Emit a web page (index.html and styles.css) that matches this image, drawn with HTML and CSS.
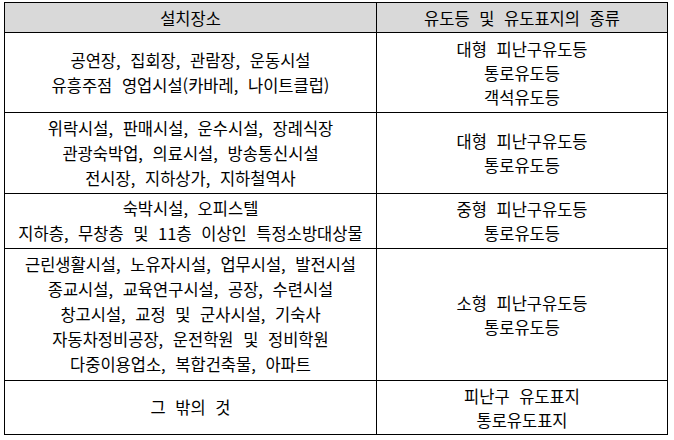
FILE: index.html
```html
<!DOCTYPE html>
<html lang="ko">
<head>
<meta charset="utf-8">
<link rel="stylesheet" href="styles.css">
</head>
<body>
<table class="tbl">
  <colgroup><col class="c1"><col class="c2"></colgroup>
  <thead>
    <tr class="h"><th>설치장소</th><th>유도등 및 유도표지의 종류</th></tr>
  </thead>
  <tbody>
    <tr class="r1">
      <td class="place">공연장, 집회장, 관람장, 운동시설<br>유흥주점 영업시설(카바레, 나이트클럽)</td>
      <td class="kind">대형 피난구유도등<br>통로유도등<br>객석유도등</td>
    </tr>
    <tr class="r2">
      <td class="place">위락시설, 판매시설, 운수시설, 장례식장<br>관광숙박업, 의료시설, 방송통신시설<br>전시장, 지하상가, 지하철역사</td>
      <td class="kind">대형 피난구유도등<br>통로유도등</td>
    </tr>
    <tr class="r3">
      <td class="place">숙박시설, 오피스텔<br>지하층, 무창층 및 11층 이상인 특정소방대상물</td>
      <td class="kind">중형 피난구유도등<br>통로유도등</td>
    </tr>
    <tr class="r4">
      <td class="place">근린생활시설, 노유자시설, 업무시설, 발전시설<br>종교시설, 교육연구시설, 공장, 수련시설<br>창고시설, 교정 및 군사시설, 기숙사<br>자동차정비공장, 운전학원 및 정비학원<br>다중이용업소, 복합건축물, 아파트</td>
      <td class="kind">소형 피난구유도등<br>통로유도등</td>
    </tr>
    <tr class="r5">
      <td class="place">그 밖의 것</td>
      <td class="kind">피난구 유도표지<br>통로유도표지</td>
    </tr>
  </tbody>
</table>
</body>
</html>
```
FILE: styles.css
```css
html, body {
  margin: 0;
  padding: 0;
  background: #ffffff;
}
body {
  padding: 2px 0 0 4px;
  font-family: "Noto Sans CJK KR", "Noto Sans", sans-serif;
  font-size: 16.5px;
  color: #000000;
}
.tbl {
  border-collapse: collapse;
  table-layout: fixed;
  width: 663px;
}
.c1 { width: 372px; }
.c2 { width: 291px; }
.tbl th,
.tbl td {
  border: 1px solid #000000;
  padding: 0;
  text-align: center;
  vertical-align: middle;
  font-weight: normal;
  word-spacing: 5px;
}
.tbl th {
  background: #d9d9d9;
  line-height: 24px;
}
.place { line-height: 25px; }
.kind { line-height: 24px; }
.h { height: 30px; }
.r1 { height: 80px; }
.r2 { height: 81px; }
.r3 { height: 55px; }
.r4 { height: 132px; }
.r5 { height: 54px; }
```
